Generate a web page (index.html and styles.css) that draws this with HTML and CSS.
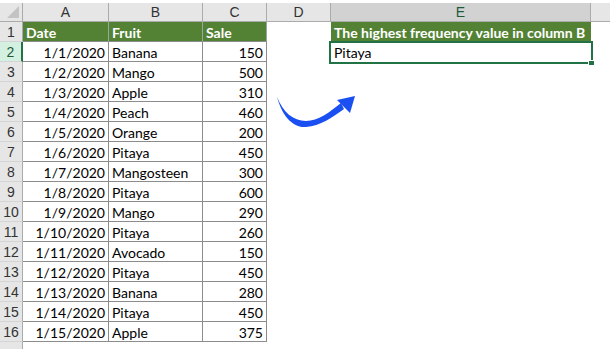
FILE: index.html
```html
<!DOCTYPE html>
<html lang="en">
<head>
<meta charset="utf-8">
<title>Sheet1</title>
<link rel="stylesheet" href="styles.css">
</head>
<body>
<div class="sheet">
  <div class="grid">
    <!-- column headings -->
    <div class="colhead corner"><span class="corner-tri"></span></div>
    <div class="colhead">A</div>
    <div class="colhead">B</div>
    <div class="colhead">C</div>
    <div class="colhead">D</div>
    <div class="colhead sel">E</div>
    <div class="colhead last"></div>

    <div class="rowhead">1</div>
    <div class="cell hd">Date</div>
    <div class="cell hd">Fruit</div>
    <div class="cell hd">Sale</div>
    <div class="blank"></div>
    <div class="blank title">The highest frequency value in column B</div>
    <div class="blank"></div>

    <div class="rowhead sel">2</div>
    <div class="cell num">1/1/2020</div>
    <div class="cell">Banana</div>
    <div class="cell num">150</div>
    <div class="blank"></div>
    <div class="blank active">Pitaya<span class="handle"></span></div>
    <div class="blank"></div>

    <div class="rowhead">3</div>
    <div class="cell num">1/2/2020</div>
    <div class="cell">Mango</div>
    <div class="cell num">500</div>
    <div class="blank"></div><div class="blank"></div><div class="blank"></div>

    <div class="rowhead">4</div>
    <div class="cell num">1/3/2020</div>
    <div class="cell">Apple</div>
    <div class="cell num">310</div>
    <div class="blank"></div><div class="blank"></div><div class="blank"></div>

    <div class="rowhead">5</div>
    <div class="cell num">1/4/2020</div>
    <div class="cell">Peach</div>
    <div class="cell num">460</div>
    <div class="blank"></div><div class="blank"></div><div class="blank"></div>

    <div class="rowhead">6</div>
    <div class="cell num">1/5/2020</div>
    <div class="cell">Orange</div>
    <div class="cell num">200</div>
    <div class="blank"></div><div class="blank"></div><div class="blank"></div>

    <div class="rowhead">7</div>
    <div class="cell num">1/6/2020</div>
    <div class="cell">Pitaya</div>
    <div class="cell num">450</div>
    <div class="blank"></div><div class="blank"></div><div class="blank"></div>

    <div class="rowhead">8</div>
    <div class="cell num">1/7/2020</div>
    <div class="cell">Mangosteen</div>
    <div class="cell num">300</div>
    <div class="blank"></div><div class="blank"></div><div class="blank"></div>

    <div class="rowhead">9</div>
    <div class="cell num">1/8/2020</div>
    <div class="cell">Pitaya</div>
    <div class="cell num">600</div>
    <div class="blank"></div><div class="blank"></div><div class="blank"></div>

    <div class="rowhead">10</div>
    <div class="cell num">1/9/2020</div>
    <div class="cell">Mango</div>
    <div class="cell num">290</div>
    <div class="blank"></div><div class="blank"></div><div class="blank"></div>

    <div class="rowhead">11</div>
    <div class="cell num">1/10/2020</div>
    <div class="cell">Pitaya</div>
    <div class="cell num">260</div>
    <div class="blank"></div><div class="blank"></div><div class="blank"></div>

    <div class="rowhead">12</div>
    <div class="cell num">1/11/2020</div>
    <div class="cell">Avocado</div>
    <div class="cell num">150</div>
    <div class="blank"></div><div class="blank"></div><div class="blank"></div>

    <div class="rowhead">13</div>
    <div class="cell num">1/12/2020</div>
    <div class="cell">Pitaya</div>
    <div class="cell num">450</div>
    <div class="blank"></div><div class="blank"></div><div class="blank"></div>

    <div class="rowhead">14</div>
    <div class="cell num">1/13/2020</div>
    <div class="cell">Banana</div>
    <div class="cell num">280</div>
    <div class="blank"></div><div class="blank"></div><div class="blank"></div>

    <div class="rowhead">15</div>
    <div class="cell num">1/14/2020</div>
    <div class="cell">Pitaya</div>
    <div class="cell num">450</div>
    <div class="blank"></div><div class="blank"></div><div class="blank"></div>

    <div class="rowhead">16</div>
    <div class="cell num">1/15/2020</div>
    <div class="cell">Apple</div>
    <div class="cell num">375</div>
    <div class="blank"></div><div class="blank"></div><div class="blank"></div>

    <div class="rowhead"></div>
    <div class="blank"></div><div class="blank"></div><div class="blank"></div>
    <div class="blank"></div><div class="blank"></div><div class="blank"></div>
  </div>

  <!-- curved arrow pointing at the result cell -->
  <svg class="arrow" width="90" height="40" viewBox="270 92 90 40" aria-hidden="true">
    <path d="M277 97 C282 115 292 128 306 127 C320 126 333 117 344 109 L341 103 C330 112 318 121 306 121 C293 121 283 112 277 97 Z" fill="#1a4ff2"/>
    <polygon points="337,100 355,96 350,113" fill="#1a4ff2"/>
  </svg>
</div>
</body>
</html>
```

FILE: styles.css
```css
* {
  box-sizing: border-box;
}

html, body {
  margin: 0;
  padding: 0;
  background: #ffffff;
}

.sheet {
  position: relative;
  width: 610px;
  height: 349px;
  overflow: hidden;
  padding-top: 3px;
  font-family: Lato, "Liberation Sans", sans-serif;
  font-size: 14px;
  color: #000;
}

.grid {
  display: grid;
  grid-template-columns: 23px 86px 94px 64px 64px 260px 19px;
  grid-template-rows: 19px repeat(17, 20px);
}

/* column letters */
.colhead {
  background: #e6e6e6;
  border-right: 1px solid #ababab;
  border-bottom: 1px solid #ababab;
  color: #333;
  text-align: center;
  font-family: "Liberation Sans", sans-serif;
  font-size: 14px;
  line-height: 18px;
}

.colhead.sel {
  background: #d2d2d2;
  color: #1e5c38;
}

.colhead.last {
  border-right: none;
}

.corner {
  position: relative;
}

.corner-tri {
  position: absolute;
  right: 3px;
  bottom: 3px;
  width: 0;
  height: 0;
  border-left: 12px solid transparent;
  border-bottom: 12px solid #c3c3c3;
}

/* row numbers */
.rowhead {
  background: #e6e6e6;
  border-right: 1px solid #ababab;
  border-bottom: 1px solid #d4d4d4;
  color: #333;
  text-align: center;
  font-family: "Liberation Sans", sans-serif;
  font-size: 14px;
  line-height: 20px;
}

.rowhead.sel {
  background: #d3f0e0;
  color: #1e5c38;
  border-right: 2px solid #217346;
}

/* data cells */
.cell {
  border-right: 1px solid #8c8c8c;
  border-bottom: 1px solid #8c8c8c;
  padding: 1px 3px 0;
  line-height: 19px;
  white-space: nowrap;
  overflow: hidden;
}

.cell.num {
  text-align: right;
}

.cell.hd {
  background: #548235;
  color: #ffffff;
  font-weight: bold;
  border-right-color: #9aa89a;
}

.blank {
  padding: 1px 3px 0;
  line-height: 19px;
  white-space: nowrap;
}

.blank.title {
  background: #548235;
  color: #ffffff;
  font-weight: bold;
}

.blank.active {
  position: relative;
}

/* selection frame around the active cell */
.blank.active::before {
  content: "";
  position: absolute;
  left: -2px;
  top: -1px;
  right: -2px;
  bottom: -2px;
  border: 2px solid #217346;
}

.handle {
  position: absolute;
  right: -3px;
  bottom: -3px;
  width: 6px;
  height: 5px;
  background: #217346;
  border: 1px solid #ffffff;
  border-right: none;
  border-bottom: none;
}

.arrow {
  position: absolute;
  left: 270px;
  top: 92px;
}
```
